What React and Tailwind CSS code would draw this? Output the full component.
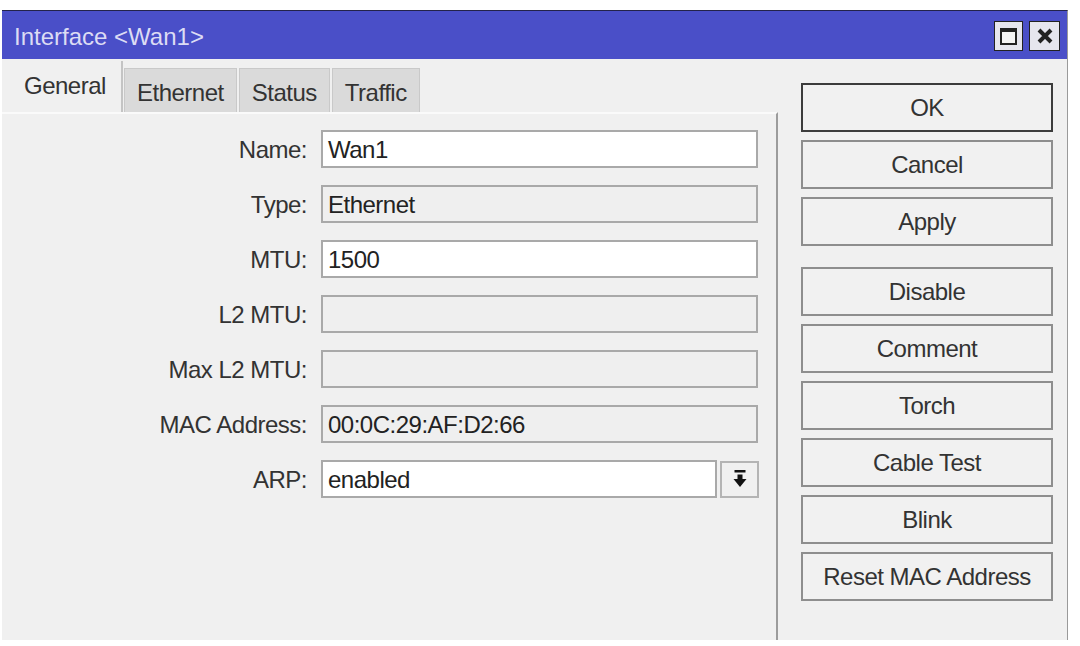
import React from "react";

const fields = [
  { label: "Name:", value: "Wan1", editable: true },
  { label: "Type:", value: "Ethernet" },
  { label: "MTU:", value: "1500", editable: true },
  { label: "L2 MTU:", value: "" },
  { label: "Max L2 MTU:", value: "" },
  { label: "MAC Address:", value: "00:0C:29:AF:D2:66" },
];

const tabs = ["Ethernet", "Status", "Traffic"];

function Field({ label, value, editable }) {
  return (
    <div className="flex items-center h-[38px]">
      <div className="w-[306px] text-right pr-[1px] pt-[1px] text-[#333]">{label}</div>
      <div
        className={
          "ml-[13px] w-[437px] h-[38px] border-2 border-[#a9a9a9] flex items-center pl-[5px] pt-[1px] text-[#222] " +
          (editable ? "bg-white" : "bg-[#efefef]")
        }
      >
        {value}
      </div>
    </div>
  );
}

function Btn({ children, primary }) {
  return (
    <div
      className={
        "w-[252px] h-[49px] border-2 flex items-center justify-center pt-[1px] text-[#333] bg-[#f1f1f1] " +
        (primary ? "border-[#3c3c3c]" : "border-[#8e8e8e]")
      }
    >
      {children}
    </div>
  );
}

export default function App() {
  return (
    <div
      className="w-[1080px] h-[646px] bg-white overflow-hidden pt-[10px] pl-[2px]"
      style={{ fontFamily: '"Liberation Sans", Arial, sans-serif' }}
    >
      <div className="w-[1066px] h-[630px] border-t border-[#23234a] border-r border-r-[#9a9a9a] bg-[#f0f0f0] flex flex-col text-[24px] tracking-[-0.5px]">
        {/* title bar */}
        <div className="h-[48px] bg-[#4a4fc8] flex items-center justify-between pl-[12px] pr-[7px]">
          <span className="text-[#dcdcf4] tracking-normal pt-[4px]">Interface &lt;Wan1&gt;</span>
          <div className="flex gap-[6px] mt-[2px]">
            <div className="w-[29px] h-[30px] bg-[#e6e6ee] border border-[#222] flex items-center justify-center">
              <div className="w-[17px] h-[17px] border-2 border-t-[4px] border-[#222] bg-[#f4f4f4]"></div>
            </div>
            <div className="w-[31px] h-[30px] bg-[#e6e6ee] border border-[#222] flex items-center justify-center">
              <svg width="18" height="18" viewBox="0 0 18 18">
                <path d="M3 3 L15 15 M15 3 L3 15" stroke="#222" strokeWidth="4" />
              </svg>
            </div>
          </div>
        </div>

        <div className="flex flex-1">
          {/* left: tabs + panel */}
          <div className="w-[776px] flex flex-col">
            <div className="h-[53px] flex items-end pl-[12px]">
              <div className="w-[109px] h-[51px] border-r-2 border-[#c4c4c4] flex items-center pl-[10px] pb-[2px] text-[#333]">
                General
              </div>
              <div className="flex gap-[2px] pl-[1px]">
                {tabs.map((t) => (
                  <div
                    key={t}
                    className="h-[44px] bg-[#dadada] border border-[#c9c9c9] border-b-0 flex items-center pt-[4px] px-[12px] text-[#333]"
                  >
                    {t}
                  </div>
                ))}
              </div>
            </div>
            <div className="flex-1 border-t-2 border-t-[#fafafa] border-r-2 border-r-[#9c9c9c] pt-[16px] flex flex-col gap-[17px]">
              {fields.map((f) => (
                <Field key={f.label} {...f} />
              ))}
              <div className="flex items-center h-[38px]">
                <div className="w-[306px] text-right pr-[1px] pt-[1px] text-[#333]">ARP:</div>
                <div className="ml-[13px] w-[396px] h-[38px] border-2 border-[#a9a9a9] bg-white flex items-center pl-[5px] pt-[1px] text-[#222]">
                  enabled
                </div>
                <div className="ml-[3px] w-[39px] h-[37px] border-2 border-[#b4b4b4] bg-[#f0f0f0] flex items-center justify-center">
                  <svg width="14" height="18" viewBox="0 0 14 18">
                    <rect x="1.5" y="0" width="11" height="2.5" fill="#111" />
                    <rect x="4.5" y="4.5" width="5" height="5" fill="#111" />
                    <path d="M0.5 9 L13.5 9 L7 17 Z" fill="#111" />
                  </svg>
                </div>
              </div>
            </div>
          </div>

          {/* right: buttons */}
          <div className="pl-[23px] pt-[24px] flex flex-col">
            <div className="flex flex-col gap-[8px]">
              <Btn primary>OK</Btn>
              <Btn>Cancel</Btn>
              <Btn>Apply</Btn>
            </div>
            <div className="flex flex-col gap-[8px] mt-[21px]">
              <Btn>Disable</Btn>
              <Btn>Comment</Btn>
              <Btn>Torch</Btn>
              <Btn>Cable Test</Btn>
              <Btn>Blink</Btn>
              <Btn>Reset MAC Address</Btn>
            </div>
          </div>
        </div>
      </div>
    </div>
  );
}
